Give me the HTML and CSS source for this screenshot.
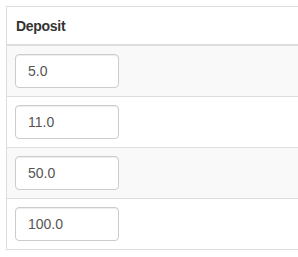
FILE: index.html
```html
<!DOCTYPE html>
<html>
<head>
<meta charset="utf-8">
<link rel="stylesheet" href="styles.css">
</head>
<body>
<div class="wrap">
<table class="grid">
<thead>
<tr><th>Deposit</th></tr>
</thead>
<tbody>
<tr class="odd"><td><input class="field" type="text" value="5.0"></td></tr>
<tr><td><input class="field" type="text" value="11.0"></td></tr>
<tr class="odd"><td><input class="field" type="text" value="50.0"></td></tr>
<tr><td><input class="field" type="text" value="100.0"></td></tr>
</tbody>
</table>
</div>
</body>
</html>
```

FILE: styles.css
```css
html, body {
  margin: 0;
  padding: 0;
  overflow: hidden;
  background: #fff;
}
body {
  font-family: "Liberation Sans", Arial, sans-serif;
  font-size: 14px;
  line-height: 20px;
  color: #333;
}
.wrap {
  padding: 6px 0 0 6px;
  overflow: hidden;
}
.grid {
  border-collapse: collapse;
  border-spacing: 0;
  width: 300px;
  border: 1px solid #ddd;
}
.grid th {
  text-align: left;
  font-weight: bold;
  padding: 9px 8px 8px 9px;
  border: 1px solid #ddd;
  border-bottom: 2px solid #ddd;
  letter-spacing: -0.3px;
}
.grid td {
  padding: 8px;
  border: 1px solid #ddd;
  vertical-align: top;
}
.grid tr.odd td {
  background: #f9f9f9;
}
.field {
  display: block;
  box-sizing: border-box;
  width: 104px;
  height: 34px;
  margin: 0;
  padding: 6px 12px;
  font-family: "Liberation Sans", Arial, sans-serif;
  font-size: 14px;
  line-height: 20px;
  color: #555;
  background: #fff;
  border: 1px solid #ccc;
  border-radius: 4px;
  box-shadow: inset 0 1px 1px rgba(0,0,0,0.075);
  outline: none;
}
```
